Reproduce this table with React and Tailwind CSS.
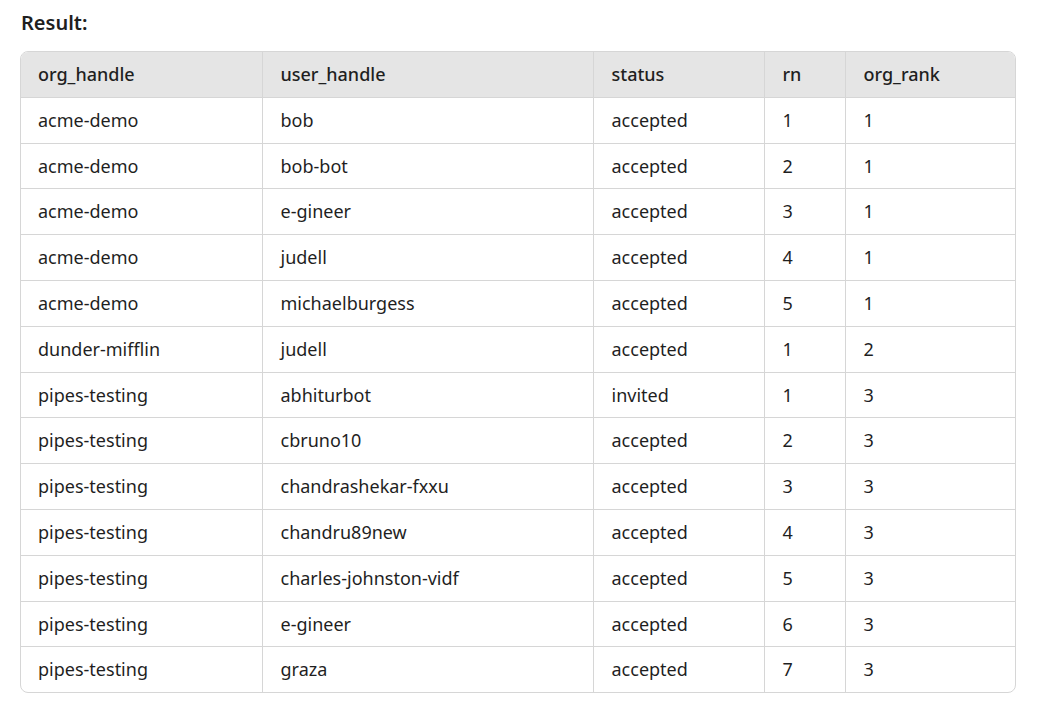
import React from "react";

const rows = [
  ["acme-demo", "bob", "accepted", "1", "1"],
  ["acme-demo", "bob-bot", "accepted", "2", "1"],
  ["acme-demo", "e-gineer", "accepted", "3", "1"],
  ["acme-demo", "judell", "accepted", "4", "1"],
  ["acme-demo", "michaelburgess", "accepted", "5", "1"],
  ["dunder-mifflin", "judell", "accepted", "1", "2"],
  ["pipes-testing", "abhiturbot", "invited", "1", "3"],
  ["pipes-testing", "cbruno10", "accepted", "2", "3"],
  ["pipes-testing", "chandrashekar-fxxu", "accepted", "3", "3"],
  ["pipes-testing", "chandru89new", "accepted", "4", "3"],
  ["pipes-testing", "charles-johnston-vidf", "accepted", "5", "3"],
  ["pipes-testing", "e-gineer", "accepted", "6", "3"],
  ["pipes-testing", "graza", "accepted", "7", "3"],
];

const headers = ["org_handle", "user_handle", "status", "rn", "org_rank"];
const widths = ["w-[241px]", "w-[331px]", "w-[171px]", "w-[81px]", "w-[172px]"];

export default function App() {
  return (
    <div className="min-h-screen bg-white px-5 pt-[9px] text-[#1f1f1f]" style={{ fontFamily: '"Noto Sans", "Open Sans", sans-serif' }}>
      <div className="text-[20px] leading-[28px] font-semibold ml-[1px]">Result:</div>
      <div className="mt-[14px] w-[996px] rounded-lg border border-[#d6d6d6] overflow-hidden">
        <table className="w-full table-fixed border-collapse text-[18px]">
          <colgroup>
            {widths.map((w, i) => (
              <col key={i} className={w} />
            ))}
          </colgroup>
          <thead>
            <tr className="bg-[#e5e5e5]">
              {headers.map((h, i) => (
                <th
                  key={h}
                  className={`text-left font-medium pr-[17px] py-[9px] leading-[26.8px] border-b border-[#d6d6d6] ${i > 0 ? "border-l pl-[18px]" : "pl-[17px]"}`}
                >
                  {h}
                </th>
              ))}
            </tr>
          </thead>
          <tbody>
            {rows.map((r, ri) => (
              <tr key={ri}>
                {r.map((c, ci) => (
                  <td
                    key={ci}
                    className={`pr-[17px] py-[9px] leading-[26.8px] border-[#d6d6d6] ${ci > 0 ? "border-l pl-[18px]" : "pl-[17px]"} ${ri < rows.length - 1 ? "border-b" : ""}`}
                  >
                    {c}
                  </td>
                ))}
              </tr>
            ))}
          </tbody>
        </table>
      </div>
    </div>
  );
}
